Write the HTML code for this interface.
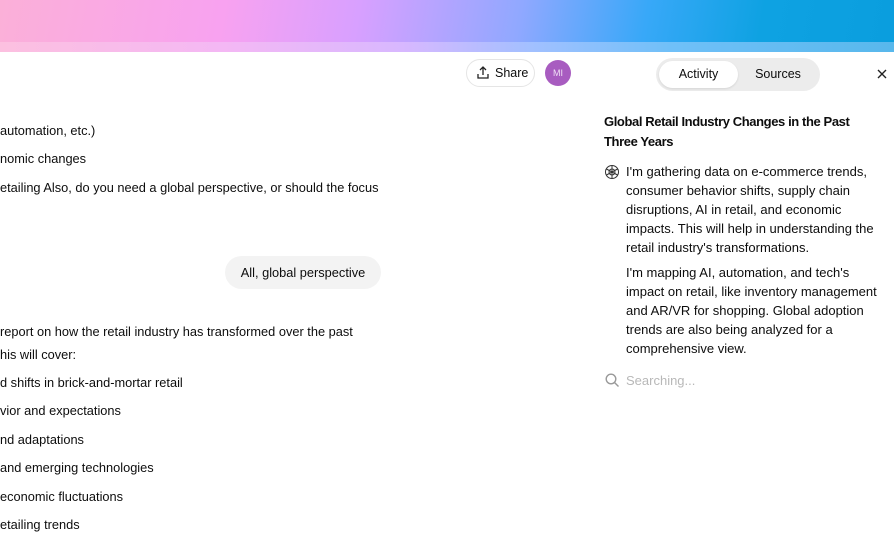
<!DOCTYPE html>
<html><head><style>
body{margin:0;width:894px;height:538px;overflow:hidden;background:#fff;font-family:"Liberation Sans",sans-serif;color:#0d0d0d;position:relative}
.top{position:absolute;left:0;top:0;width:894px;height:42px;background:linear-gradient(100deg,#fbb0d8 0%,#f8a2f0 25%,#d8a0ff 40%,#90a8ff 58%,#38a8f8 72%,#0ea2e2 85%,#0a9ede 100%)}
.strip{position:absolute;left:0;top:42px;width:894px;height:10px;background:linear-gradient(90deg,#fcc0e0 0%,#f4b8f4 25%,#d8b8ff 45%,#a0c0ff 60%,#70c0f8 75%,#58b8ec 100%)}
.t{position:absolute;font-size:12.8px;white-space:nowrap}
.r{position:absolute;left:626px;font-size:13px;line-height:19px;width:262px}
</style></head><body>
<div class="top"></div><div class="strip"></div>
<div style="position:absolute;left:466px;top:59px;width:69px;height:28px;border:1px solid #e5e5e5;border-radius:15px;font-size:12.5px;line-height:27px;box-sizing:border-box;padding-left:28px">Share</div>
<svg style="position:absolute;left:477px;top:66px" width="12" height="13" viewBox="0 0 12 13" fill="none" stroke="#222" stroke-width="1.3"><path d="M6 9V1M3 4l3-3 3 3M1 8v4h10V8"/></svg>
<div style="position:absolute;left:545px;top:60px;width:26px;height:26px;border-radius:50%;background:#a85cc0;color:#f0e0f5;font-size:9px;line-height:26px;text-align:center">MI</div>
<div style="position:absolute;left:656px;top:58px;width:164px;height:33px;border-radius:17px;background:#ececec"></div>
<div style="position:absolute;left:659px;top:61px;width:79px;height:27px;border-radius:14px;background:#fff;box-shadow:0 1px 2px rgba(0,0,0,.1);font-size:12.5px;line-height:27px;text-align:center">Activity</div>
<div style="position:absolute;left:740px;top:61px;width:76px;height:27px;font-size:12.5px;line-height:27px;text-align:center">Sources</div>
<svg style="position:absolute;left:877px;top:69px" width="10" height="10" viewBox="0 0 10 10" stroke="#222" stroke-width="1.4"><path d="M1 1l8 8M9 1l-8 8"/></svg>
<div class="t" style="left:0;top:123px">automation, etc.)</div>
<div class="t" style="left:0;top:151px">nomic changes</div>
<div class="t" style="left:0;top:180px">etailing Also, do you need a global perspective, or should the focus</div>
<div style="position:absolute;left:225px;top:256px;width:156px;height:33px;border-radius:17px;background:#f3f3f3;font-size:12.8px;line-height:33px;text-align:center">All, global perspective</div>
<div class="t" style="left:0;top:324px">report on how the retail industry has transformed over the past</div>
<div class="t" style="left:0;top:347px">his will cover:</div>
<div class="t" style="left:0;top:375px">d shifts in brick-and-mortar retail</div>
<div class="t" style="left:0;top:403px">vior and expectations</div>
<div class="t" style="left:0;top:432px">nd adaptations</div>
<div class="t" style="left:0;top:460px">and emerging technologies</div>
<div class="t" style="left:0;top:489px">economic fluctuations</div>
<div class="t" style="left:0;top:517px">etailing trends</div>
<div style="position:absolute;left:604px;top:112px;font-size:13px;font-weight:bold;letter-spacing:-0.4px;line-height:19.5px;width:275px">Global Retail Industry Changes in the Past Three Years</div>
<svg style="position:absolute;left:604px;top:164px" width="16" height="16" viewBox="0 0 16 16" fill="none" stroke="#333" stroke-width="1"><circle cx="8" cy="8" r="6.5"/><circle cx="8" cy="8" r="3" /><path d="M8 1.5v6.5M2.5 5l5.5 3M2.5 11l5.5-3M8 14.5V8M13.5 11L8 8M13.5 5L8 8"/></svg>
<div class="r" style="top:162px">I'm gathering data on e-commerce trends, consumer behavior shifts, supply chain disruptions, AI in retail, and economic impacts. This will help in understanding the retail industry's transformations.</div>
<div class="r" style="top:263px">I'm mapping AI, automation, and tech's impact on retail, like inventory management and AR/VR for shopping. Global adoption trends are also being analyzed for a comprehensive view.</div>
<svg style="position:absolute;left:605px;top:373px" width="15" height="15" viewBox="0 0 15 15" fill="none" stroke="#999" stroke-width="1.4"><circle cx="6" cy="6" r="4.8"/><path d="M9.5 9.5l4 4"/></svg>
<div class="r" style="top:371px;color:#b8b8b8">Searching...</div>
</body></html>
